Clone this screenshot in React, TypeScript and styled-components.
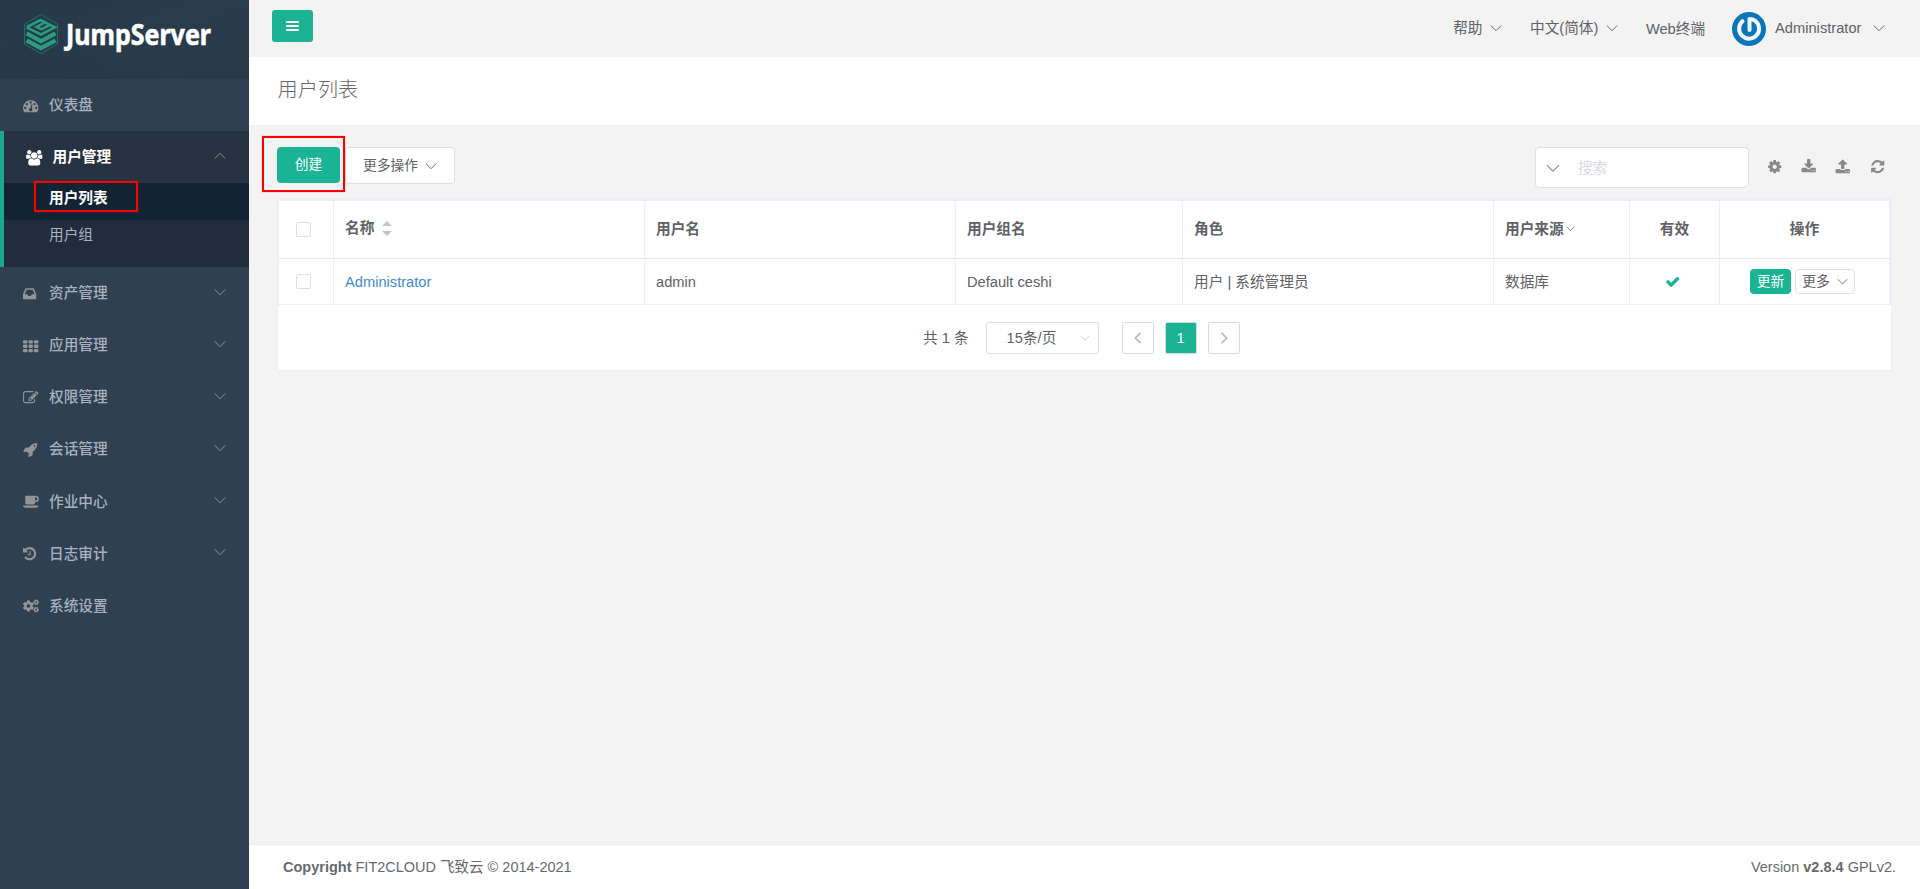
import React from 'react';
import styled, { createGlobalStyle, css } from 'styled-components';
import { FaCogs } from 'react-icons/fa';

const Global = createGlobalStyle`
  * { box-sizing: border-box; }
  body {
    margin: 0;
    background: #f3f3f4;
    color: #676a6c;
    font-family: "Liberation Sans", "Noto Sans CJK SC", sans-serif;
    font-size: 14.67px;
    line-height: 20px;
  }
`;

const glyphs = {
  dashboard: 'M384 1152q0-53-37.5-90.5t-90.5-37.5-90.5 37.5-37.5 90.5 37.5 90.5 90.5 37.5 90.5-37.5 37.5-90.5zm192-448q0-53-37.5-90.5t-90.5-37.5-90.5 37.5-37.5 90.5 37.5 90.5 90.5 37.5 90.5-37.5 37.5-90.5zm428 481l101-382q6-26-7.5-48.5t-38.5-29.5-48 6.5-30 39.5l-101 382q-60 5-107 43.5t-63 98.5q-20 77 20 146t117 89 146-20 89-117q16-60-6-117t-72-91zm660-33q0-53-37.5-90.5t-90.5-37.5-90.5 37.5-37.5 90.5 37.5 90.5 90.5 37.5 90.5-37.5 37.5-90.5zm-640-640q0-53-37.5-90.5t-90.5-37.5-90.5 37.5-37.5 90.5 37.5 90.5 90.5 37.5 90.5-37.5 37.5-90.5zm448 192q0-53-37.5-90.5t-90.5-37.5-90.5 37.5-37.5 90.5 37.5 90.5 90.5 37.5 90.5-37.5 37.5-90.5zm320 448q0 261-141 483-19 29-54 29h-1402q-35 0-54-29-141-221-141-483 0-182 71-348t191-286 286-191 348-71 348 71 286 191 191 286 71 348z',
  group: 'M593 896q-162 5-265 128h-134q-82 0-138-40.5t-56-118.5q0-353 124-353 6 0 43.5 21t97.5 42.5 119 21.5q67 0 133-23-5 37-5 66 0 139 81 256zm1071 637q0 120-73 189.5t-194 69.5h-874q-121 0-194-69.5t-73-189.5q0-53 3.5-103.5t14-109 26.5-108.5 43-97.5 62-81 85.5-53.5 111.5-20q10 0 43 21.5t73 48 107 48 135 21.5 135-21.5 107-48 73-48 43-21.5q61 0 111.5 20t85.5 53.5 62 81 43 97.5 26.5 108.5 14 109 3.5 103.5zm-1024-1277q0 106-75 181t-181 75-181-75-75-181 75-181 181-75 181 75 75 181zm704 384q0 159-112.5 271.5t-271.5 112.5-271.5-112.5-112.5-271.5 112.5-271.5 271.5-112.5 271.5 112.5 112.5 271.5zm576 225q0 78-56 118.5t-138 40.5h-134q-103-123-265-128 81-117 81-256 0-29-5-66 66 23 133 23 59 0 119-21.5t97.5-42.5 43.5-21q124 0 124 353zm-128-609q0 106-75 181t-181 75-181-75-75-181 75-181 181-75 181 75 75 181z',
  inbox: 'M1023 960h316q-1-3-2.500-8t-2.500-8l-212-496h-708l-212 496q-1 2-2.500 8t-2.500 8h316l95 192h320zm513 30v482q0 26-19 45t-45 19h-1408q-26 0-45-19t-19-45v-482q0-62 25-123l238-552q10-25 36.500-42t52.500-17h832q26 0 52.500 17t36.500 42l238 552q25 61 25 123z',
  grid: 'M96 256h320q96 0 96 96v192q0 96-96 96h-320q-96 0-96-96v-192q0-96 96-96zm640 0h320q96 0 96 96v192q0 96-96 96h-320q-96 0-96-96v-192q0-96 96-96zm640 0h320q96 0 96 96v192q0 96-96 96h-320q-96 0-96-96v-192q0-96 96-96zM96 768h320q96 0 96 96v192q0 96-96 96h-320q-96 0-96-96v-192q0-96 96-96zm640 0h320q96 0 96 96v192q0 96-96 96h-320q-96 0-96-96v-192q0-96 96-96zm640 0h320q96 0 96 96v192q0 96-96 96h-320q-96 0-96-96v-192q0-96 96-96zM96 1280h320q96 0 96 96v192q0 96-96 96h-320q-96 0-96-96v-192q0-96 96-96zm640 0h320q96 0 96 96v192q0 96-96 96h-320q-96 0-96-96v-192q0-96 96-96zm640 0h320q96 0 96 96v192q0 96-96 96h-320q-96 0-96-96v-192q0-96 96-96z',
  edit: 'M888 1184l116-116-152-152-116 116v56h96v96h56zm440-720q-16-16-33 1l-350 350q-17 17-1 33t33-1l350-350q17-17 1-33zm80 594v190q0 119-84.5 203.500t-203.500 84.500h-832q-119 0-203.500-84.500t-84.500-203.500v-832q0-119 84.500-203.500t203.500-84.500h832q63 0 117 25 15 7 18 23 3 17-9 29l-49 49q-14 14-32 8-23-6-45-6h-832q-66 0-113 47t-47 113v832q0 66 47 113t113 47h832q66 0 113-47t47-113v-126q0-13 9-22l64-64q15-15 35-7t20 29zm-96-738l288 288-672 672h-288v-288zm444 132l-92 92-288-288 92-92q28-28 68-28t68 28l152 152q28 28 28 68t-28 68z',
  rocket: 'M1440 448q0-40-28-68t-68-28-68 28-28 68 28 68 68 28 68-28 28-68zm224-288q0 249-75.5 430.500t-253.500 360.500q-81 80-195 176l-20 379q-2 16-16 26l-384 224q-7 4-16 4-12 0-23-9l-64-64q-13-14-8-32l85-276-281-281-276 85q-3 1-9 1-14 0-23-9l-64-64q-17-19-5-39l224-384q10-14 26-16l379-20q96-114 176-195 188-187 358-258t431-71q14 0 24 9.500t10 22.500z',
  coffee: 'M1664 576q0-80-56-136t-136-56h-64v384h64q80 0 136-56t56-136zm-1664 768h1792q0 106-75 181t-181 75h-1280q-106 0-181-75t-75-181zm1856-768q0 159-112.500 271.500t-271.500 112.500h-64v32q0 92-66 158t-158 66h-704q-92 0-158-66t-66-158v-736q0-26 19-45t45-19h1152q159 0 271.500 112.500t112.500 271.500z',
  history: 'M1536 896q0 156-61 298t-164 245-245 164-298 61q-172 0-327-72.500t-264-204.500q-7-10-6.500-22.500t8.500-20.500l137-138q10-9 25-9 16 2 23 12 73 95 179 147t225 52q104 0 198.500-40.500t163.500-109.500 109.500-163.500 40.500-198.500-40.500-198.500-109.500-163.500-163.500-109.500-198.500-40.500q-98 0-188 35.500t-160 101.500l137 138q31 30 14 69-17 40-59 40h-448q-26 0-45-19t-19-45v-448q0-42 40-59 39-17 69 14l130 129q107-101 244.500-156.500t284.500-55.500q156 0 298 61t245 164 164 245 61 298zm-640-288v448q0 14-9 23t-23 9h-320q-14 0-23-9t-9-23v-64q0-14 9-23t23-9h224v-352q0-14 9-23t23-9h64q14 0 23 9t9 23z',
  cog: 'M1152 896q0-106-75-181t-181-75-181 75-75 181 75 181 181 75 181-75 75-181zm512-109v222q0 12-8 23t-20 13l-185 28q-19 54-39 91 35 50 107 138 10 12 10 25t-9 23q-27 37-99 108t-94 71q-12 0-26-9l-138-108q-44 23-91 38-16 136-29 186-7 28-36 28h-222q-14 0-24.5-8.500t-11.500-21.500l-28-184q-49-16-90-37l-141 107q-10 9-25 9-14 0-25-11-126-114-165-168-7-10-7-23 0-12 8-23 15-21 51-66.500t54-70.500q-27-50-41-99l-183-27q-13-2-21-12.500t-8-23.500v-222q0-12 8-23t19-13l186-28q14-46 39-92-40-57-107-138-10-12-10-24 0-10 9-23 26-36 98.500-107.500t94.500-71.500q13 0 26 10l138 107q44-23 91-38 16-136 29-186 7-28 36-28h222q14 0 24.500 8.500t11.500 21.500l28 184q49 16 90 37l142-107q9-9 24-9 13 0 25 10 129 119 165 170 7 8 7 22 0 12-8 23-15 21-51 66.500t-54 70.500q26 50 41 98l183 28q13 2 21 12.500t8 23.500z',
  download: 'M1344 1344q0-26-19-45t-45-19-45 19-19 45 19 45 45 19 45-19 19-45zm256 0q0-26-19-45t-45-19-45 19-19 45 19 45 45 19 45-19 19-45zm128-224v320q0 40-28 68t-68 28h-1472q-40 0-68-28t-28-68v-320q0-40 28-68t68-28h465l135 136q58 56 136 56t136-56l136-136h464q40 0 68 28t28 68zm-325-569q17 41-14 70l-448 448q-18 19-45 19t-45-19l-448-448q-31-29-14-70 17-39 59-39h256v-448q0-26 19-45t45-19h256q26 0 45 19t19 45v448h256q42 0 59 39z',
  upload: 'M1344 1472q0-26-19-45t-45-19-45 19-19 45 19 45 45 19 45-19 19-45zm256 0q0-26-19-45t-45-19-45 19-19 45 19 45 45 19 45-19 19-45zm128-224v320q0 40-28 68t-68 28h-1472q-40 0-68-28t-28-68v-320q0-40 28-68t68-28h427q21 56 70.500 92t110.500 36h256q61 0 110.500-36t70.500-92h427q40 0 68 28t28 68zm-325-648q-17 40-59 40h-256v448q0 26-19 45t-45 19h-256q-26 0-45-19t-19-45v-448h-256q-42 0-59-40-17-39 14-69l448-448q18-19 45-19t45 19l448 448q31 30 14 69z',
  refresh: 'M1639 1056q0 5-1 7-64 268-268 434.500t-478 166.500q-146 0-282.500-55t-243.500-157l-129 129q-19 19-45 19t-45-19-19-45v-448q0-26 19-45t45-19h448q26 0 45 19t19 45-19 45l-137 137q71 66 161 102t187 36q134 0 250-65t186-179q11-17 53-117 8-23 30-23h192q13 0 22.500 9.500t9.500 22.500zm25-800v448q0 26-19 45t-45 19h-448q-26 0-45-19t-19-45 19-45l138-138q-148-137-349-137-134 0-250 65t-186 179q-11 17-53 117-8 23-30 23h-199q-13 0-22.500-9.500t-9.500-22.500v-7q65-268 270-434.500t480-166.500q146 0 284 55.500t245 156.500l130-129q19-19 45-19t45 19 19 45z',
  check: 'M1671 566q0 40-28 68l-724 724-136 136q-28 28-68 28t-68-28l-136-136-362-362q-28-28-28-68t28-68l136-136q28-28 68-28t68 28l294 295 656-657q28-28 68-28t68 28l136 136q28 28 28 68z',
};
type GlyphName = keyof typeof glyphs;

const Glyph = ({ name, size = 15.4 }: { name: GlyphName; size?: number }) => (
  <svg width={(size * 1920) / 1792} height={size} viewBox="0 0 1920 1792" fill="currentColor">
    <path d={glyphs[name]} />
  </svg>
);

type Dir = 'down' | 'up' | 'left' | 'right';
const angle = { down: 0, up: 180, left: 90, right: -90 };
const Chevron = ({ dir = 'down', size = 12, weight = 0.95 }: { dir?: Dir; size?: number; weight?: number }) => (
  <svg width={size} height={size} viewBox="0 0 12 12" fill="none" stroke="currentColor" strokeWidth={weight}>
    <path d="M.8 3.500 6 8.700l5.200-5.200" transform={`rotate(${angle[dir]} 6 6)`} />
  </svg>
);

const Page = styled.div`
  display: flex;
  height: 889px;
  overflow: hidden;
`;
const Sidebar = styled.aside`
  width: 249px;
  flex: none;
  background: #2f4050;
`;
const Brand = styled.div`
  height: 79px;
  background: linear-gradient(160deg, #263949 0%, #293b4a 50%, #273847 100%);
  svg { display: block; }
`;
const MenuLink = styled.div<{ $active?: boolean }>`
  display: flex;
  align-items: center;
  height: ${p => (p.$active ? 52 : 52.1)}px;
  padding: 0 23px 0 22.5px;
  color: ${p => (p.$active ? '#fff' : '#a7b1c2')};
  font-weight: ${p => (p.$active ? 600 : 500)};
`;
const MenuIcon = styled.span<{ $active?: boolean }>`
  display: flex;
  width: 26.500px;
  padding-top: ${p => (p.$active ? 2 : 1)}px;
  color: ${p => (p.$active ? '#fff' : '#929498')};
`;
const MenuArrow = styled.span`
  display: flex;
  margin-left: auto;
  padding-bottom: 3px;
  color: #909399;
`;
const ActiveGroup = styled.div`
  height: 136px;
  border-left: 4px solid #19aa8d;
  background: #212d3d;
  > ${MenuLink} { background: #263241; padding-left: 22px; }
`;
const SubLink = styled.div<{ $current?: boolean }>`
  display: flex;
  align-items: center;
  height: 37px;
  padding: 0 0 7px 45px;
  ${p => p.$current ? css`color: #fff; font-weight: 600; background: #122334;` : css`color: #a7b1c2; padding-bottom: 8px;`}
`;
const Marker = styled.div<{ $x: number; $y: number; $w: number; $h: number }>`
  position: absolute;
  left: ${p => p.$x}px;
  top: ${p => p.$y}px;
  width: ${p => p.$w}px;
  height: ${p => p.$h}px;
  border: 2px solid #fe0000;
  box-shadow: 0 0 1px rgba(255, 0, 0, .6);
`;

const Main = styled.main`
  flex: 1;
  min-width: 0;
  display: flex;
  flex-direction: column;
`;
const TopBar = styled.header`
  height: 57px;
  flex: none;
  display: flex;
  align-items: flex-start;
  padding: 10px 35px 0 23px;
  background: #f3f3f4;
`;
const Burger = styled.button`
  width: 41px;
  height: 32px;
  padding: 0;
  border: 0;
  border-radius: 3px;
  background: #1ab394;
  display: flex;
  flex-direction: column;
  align-items: center;
  justify-content: center;
  gap: 2px;
  i { width: 13px; height: 2px; background: #fff; border-radius: 1px; }
`;
const TopNav = styled.nav`
  margin-left: auto;
  display: flex;
  align-items: center;
  height: 36px;
  color: #606266;
`;
const TopItem = styled.div<{ $gap: number; $drop?: number }>`
  display: flex;
  align-items: center;
  gap: 7.5px;
  margin-right: ${p => p.$gap}px;
  padding-top: ${p => p.$drop || 0}px;
  white-space: nowrap;
`;
const Avatar = styled.svg`
  width: 34px;
  height: 34px;
  margin: 2px 9.5px 0 0;
`;
const Heading = styled.div`
  height: 68px;
  flex: none;
  padding: 21px 28.5px;
  background: #fff;
  font-size: 20.2px;
  font-weight: 300;
  line-height: 24px;
`;
const Content = styled.section`
  flex: 1;
  padding: 22px 29px 0 28px;
`;
const Toolbar = styled.div`
  display: flex;
  align-items: flex-start;
  height: 52px;
  padding-right: 5px;
  button + button { margin-left: 5px; }
`;
const Button = styled.button<{ $primary?: boolean; $w: number; $h: number }>`
  width: ${p => p.$w}px;
  height: ${p => p.$h}px;
  padding: 0;
  display: flex;
  align-items: center;
  justify-content: center;
  gap: 7px;
  border: 1px solid ${p => (p.$primary ? '#1ab394' : '#dcdfe6')};
  border-radius: 3.5px;
  background: ${p => (p.$primary ? '#1ab394' : '#fff')};
  color: ${p => (p.$primary ? '#fff' : '#606266')};
  font: 13.75px/18px "Liberation Sans", "Noto Sans CJK SC", sans-serif;
`;
const Search = styled.div`
  width: 214px;
  height: 41px;
  margin-left: auto;
  margin-right: 18px;
  display: flex;
  align-items: center;
  gap: 18px;
  padding: 1px 0 0 10px;
  border: 1px solid #dcdfe6;
  border-radius: 4px;
  background: #fff;
  color: #d7dae0;
  svg { color: #8c8f94; }
`;
const Tools = styled.div`
  display: flex;
  gap: 17.7px;
  padding-top: 12px;
  color: #888;
`;
const Card = styled.div`
  width: 1613px;
  height: 171px;
  margin-left: 1px;
  background: #fff;
  box-shadow: 0 0 0 1px #ebeef5;
  border-radius: 2px;
  color: #606266;
`;
const Row = styled.div<{ $head?: boolean }>`
  display: grid;
  grid-template-columns: 55px 311px 311px 227px 311px 136px 90px 1fr;
  height: ${p => (p.$head ? 60 : 46)}px;
  border: 1px solid #ebeef5;
  border-width: ${p => (p.$head ? 2 : 0)}px 2px 1px 1px;
  border-bottom-color: ${p => (p.$head ? '#e4e6ea' : '#ebeef5')};
  font-weight: ${p => (p.$head ? 700 : 400)};
`;
const Cell = styled.div<{ $center?: boolean; $lift?: number }>`
  display: flex;
  align-items: center;
  justify-content: ${p => (p.$center ? 'center' : 'flex-start')};
  padding: 0 ${p => (p.$center ? 0 : 11)}px ${p => p.$lift || 0}px;
  border-right: 1px solid #ebeef5;
  white-space: nowrap;
  &:last-child { border-right: 0; }
`;
const CheckBox = styled.span`
  width: 15px;
  height: 15px;
  border: 1px solid #dcdfe6;
  border-radius: 2px;
  background: #fff;
  margin-right: 5px;
`;
const NameLink = styled.a`color: #428bca;`;
const Sort = styled.span`
  display: flex;
  flex-direction: column;
  gap: 5px;
  margin: 2px 0 0 8px;
  i { border: 5px solid transparent; width: 0; height: 0; }
  i:first-child { border-top: 0; border-bottom-color: #c0c4cc; }
  i:last-child { border-bottom: 0; border-top-color: #c0c4cc; }
`;
const SourceLabel = styled.span`
  display: flex;
  align-items: center;
  gap: 2px;
`;
const Valid = styled.span`display: flex; margin-right: 2px; color: #1ab394;`;
const Actions = styled.div`display: flex; gap: 4px; margin-right: 4px;`;
const Pager = styled.div`
  display: flex;
  align-items: center;
  height: 65px;
  padding: 0 0 0 645px;
`;
const SizeSelect = styled.div`
  width: 113px;
  height: 32px;
  margin: 0 23px 0 17px;
  padding: 0 8px 0 20px;
  display: flex;
  align-items: center;
  justify-content: space-between;
  border: 1px solid #dcdfe6;
  border-radius: 3px;
  svg { color: #c0c4cc; }
`;
const PageButton = styled.span<{ $on?: boolean }>`
  width: 32px;
  height: 32px;
  margin-right: 11px;
  display: flex;
  align-items: center;
  justify-content: center;
  border: 1px solid #d5dbe2;
  border-radius: 2px;
  background: ${p => (p.$on ? '#1ab394' : '#fff')};
  color: ${p => (p.$on ? '#fff' : '#b4b9c2')};
`;
const Footer = styled.footer`
  height: 45px;
  flex: none;
  display: flex;
  justify-content: space-between;
  padding: 12px 24px 0 34px;
  border-top: 1px solid #e7eaec;
  background: #fff;
  font-size: 14.500px;
`;

const Logo = () => (
  <svg width="249" height="79" viewBox="0 0 249 79">
    <path d="M0 55 60 20 110 79H0z" fill="#24384a" opacity=".2" />
    <path d="M120 40 155 0H249V79H155z" fill="#2c3e4e" opacity=".35" />
    <path d="M41 14.500 57.500 24.200V44L41 53.700 24.500 44V24.200z" fill="none" stroke="#1f6f68" strokeWidth="1" />
    <g fill="none" stroke="#2b9b80">
      <path d="M26.500 33.300 41 41 55.500 33.300M26.500 40.300 41 48 55.500 40.300" strokeWidth="4.200" />
      <path d="M27 27 40.500 20 45 22.300 36.500 27 41.500 29.300 49.500 25M26.500 27.300 41 34.500 55 27.300 46 22.800" strokeWidth="2.600" />
    </g>
    <text x="66" y="44.500" fill="#fff" stroke="#fff" strokeWidth=".6" fontFamily="'Noto Sans', sans-serif" fontSize="28" fontWeight="700" textLength="145" lengthAdjust="spacingAndGlyphs">JumpServer</text>
  </svg>
);

const Power = () => (
  <Avatar viewBox="0 0 34 34">
    <circle cx="17" cy="17" r="17" fill="#0a75b9" />
    <path d="M10.500 9.200a10 10 0 1 0 13-.2q-2.500-2-6-2V18" fill="none" stroke="#f5f5f5" strokeWidth="4" strokeLinecap="round" strokeLinejoin="round" />
  </Avatar>
);

const menu: { icon: GlyphName; label: string }[] = [
  { icon: 'inbox', label: '资产管理' },
  { icon: 'grid', label: '应用管理' },
  { icon: 'edit', label: '权限管理' },
  { icon: 'rocket', label: '会话管理' },
  { icon: 'coffee', label: '作业中心' },
  { icon: 'history', label: '日志审计' },
];

export default function App() {
  return (
    <>
      <Global />
      <Page>
        <Sidebar>
          <Brand><Logo /></Brand>
          <MenuLink><MenuIcon><Glyph name="dashboard" /></MenuIcon>仪表盘</MenuLink>
          <ActiveGroup>
            <MenuLink $active>
              <MenuIcon $active><Glyph name="group" /></MenuIcon>用户管理
              <MenuArrow><Chevron dir="up" /></MenuArrow>
            </MenuLink>
            <SubLink $current>用户列表</SubLink>
            <SubLink>用户组</SubLink>
          </ActiveGroup>
          {menu.map(m => (
            <MenuLink key={m.label}>
              <MenuIcon><Glyph name={m.icon} /></MenuIcon>{m.label}
              <MenuArrow><Chevron /></MenuArrow>
            </MenuLink>
          ))}
          <MenuLink><MenuIcon><FaCogs size={16} /></MenuIcon>系统设置</MenuLink>
        </Sidebar>
        <Main>
          <TopBar>
            <Burger><i /><i /><i /></Burger>
            <TopNav>
              <TopItem $gap={28}>帮助<Chevron /></TopItem>
              <TopItem $gap={28}>中文(简体)<Chevron /></TopItem>
              <TopItem $gap={26.5} $drop={2}>Web终端</TopItem>
              <Power />
              <TopItem $gap={0}>Administrator&nbsp;<Chevron /></TopItem>
            </TopNav>
          </TopBar>
          <Heading>用户列表</Heading>
          <Content>
            <Toolbar>
              <Button $primary $w={63} $h={36}>创建</Button>
              <Button $w={110} $h={37}>更多操作<Chevron /></Button>
              <Search><Chevron size={14} />搜索</Search>
              <Tools>
                <Glyph name="cog" /><Glyph name="download" /><Glyph name="upload" /><Glyph name="refresh" />
              </Tools>
            </Toolbar>
            <Card>
              <Row $head>
                <Cell $center><CheckBox /></Cell>
                <Cell $lift={4}>名称<Sort><i /><i /></Sort></Cell>
                <Cell $lift={2}>用户名</Cell>
                <Cell $lift={2}>用户组名</Cell>
                <Cell $lift={2}>角色</Cell>
                <Cell $lift={2}><SourceLabel>用户来源<Chevron size={9} /></SourceLabel></Cell>
                <Cell $center $lift={2}>有效</Cell>
                <Cell $center $lift={2}>操作</Cell>
              </Row>
              <Row>
                <Cell $center><CheckBox /></Cell>
                <Cell><NameLink>Administrator</NameLink></Cell>
                <Cell>admin</Cell>
                <Cell>Default ceshi</Cell>
                <Cell>用户 | 系统管理员</Cell>
                <Cell>数据库</Cell>
                <Cell $center><Valid><Glyph name="check" /></Valid></Cell>
                <Cell $center>
                  <Actions>
                    <Button $primary $w={41} $h={25}>更新</Button>
                    <Button $w={60} $h={25}>更多<Chevron size={11} /></Button>
                  </Actions>
                </Cell>
              </Row>
              <Pager>
                <span>共 1 条</span>
                <SizeSelect>15条/页<Chevron size={10} /></SizeSelect>
                <PageButton><Chevron dir="left" weight={1.7} /></PageButton>
                <PageButton $on>1</PageButton>
                <PageButton><Chevron dir="right" weight={1.7} /></PageButton>
              </Pager>
            </Card>
          </Content>
          <Footer>
            <span><b>Copyright</b> FIT2CLOUD 飞致云 © 2014-2021</span>
            <span>Version <b>v2.8.4</b> GPLv2.</span>
          </Footer>
        </Main>
        <Marker $x={34} $y={181} $w={104} $h={31} />
        <Marker $x={262} $y={136} $w={83} $h={56} />
      </Page>
    </>
  );
}
